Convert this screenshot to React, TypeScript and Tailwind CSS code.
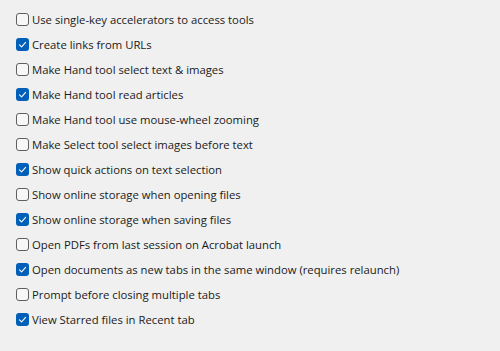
import React from 'react';

const options: { label: string; checked: boolean }[] = [
  { label: 'Use single-key accelerators to access tools', checked: false },
  { label: 'Create links from URLs', checked: true },
  { label: 'Make Hand tool select text & images', checked: false },
  { label: 'Make Hand tool read articles', checked: true },
  { label: 'Make Hand tool use mouse-wheel zooming', checked: false },
  { label: 'Make Select tool select images before text', checked: false },
  { label: 'Show quick actions on text selection', checked: true },
  { label: 'Show online storage when opening files', checked: false },
  { label: 'Show online storage when saving files', checked: true },
  { label: 'Open PDFs from last session on Acrobat launch', checked: false },
  { label: 'Open documents as new tabs in the same window (requires relaunch)', checked: true },
  { label: 'Prompt before closing multiple tabs', checked: false },
  { label: 'View Starred files in Recent tab', checked: true },
];

const Checkbox: React.FC<{ checked: boolean }> = ({ checked }) =>
  checked ? (
    <span className="w-[13px] h-[13px] rounded-[3px] bg-[#005fb8] flex items-center justify-center shrink-0">
      <svg width="9" height="9" viewBox="0 0 9 9" fill="none">
        <path d="M1.5 4.8 L3.6 6.8 L7.6 2.4" stroke="white" strokeWidth="1.1" strokeLinecap="round" strokeLinejoin="round" />
      </svg>
    </span>
  ) : (
    <span className="w-[13px] h-[13px] rounded-[3px] border border-[#5f5f5f] bg-[#f7f7f7] shrink-0" />
  );

export default function App() {
  return (
    <div
      className="w-[500px] h-[351px] bg-[#f0f0f0] pt-[7px] pl-[16px] text-[11.3px] text-[#1a1a1a]"
      style={{ fontFamily: '"Open Sans", "Noto Sans", sans-serif' }}
    >
      {options.map(o => (
        <label key={o.label} className="flex items-center h-[25px] gap-[3px]">
          <Checkbox checked={o.checked} />
          <span className="leading-none whitespace-nowrap">{o.label}</span>
        </label>
      ))}
    </div>
  );
}
